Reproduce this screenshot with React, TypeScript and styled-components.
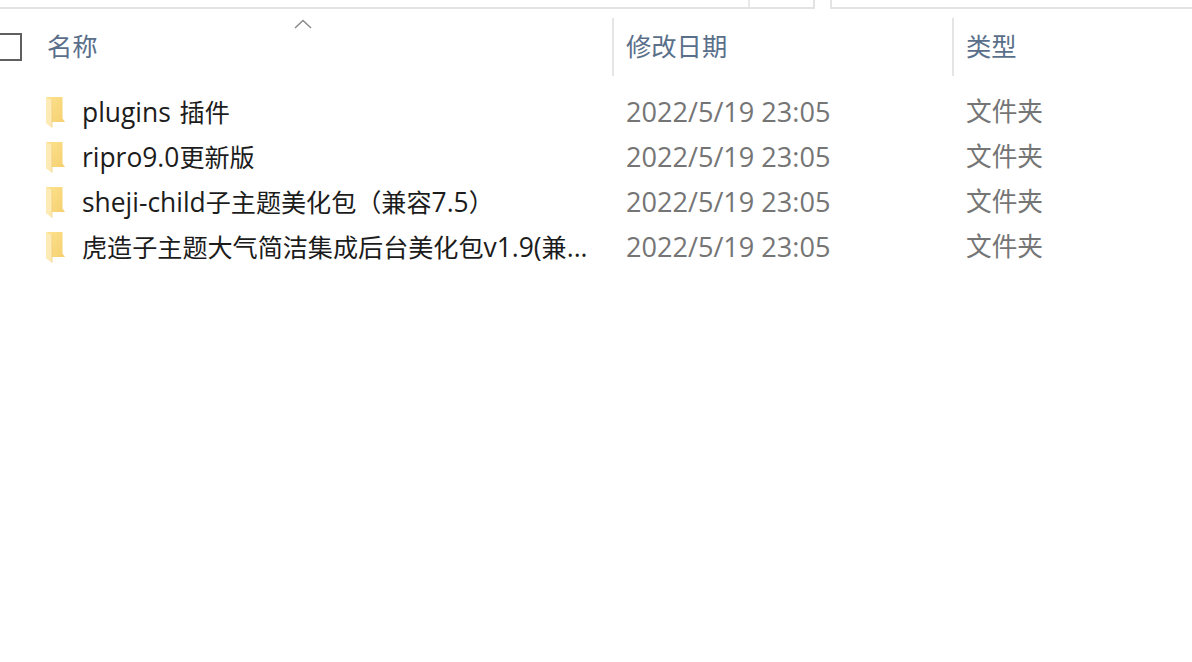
import styled, { createGlobalStyle } from 'styled-components'

const rows = [
  'plugins 插件',
  'ripro9.0更新版',
  'sheji-child子主题美化包（兼容7.5）',
  '虎造子主题大气简洁集成后台美化包v1.9(兼...',
]

const FolderIcon = () => (
  <svg width="24" height="32" viewBox="0 0 24 32">
    <defs>
      <linearGradient id="folderBack" x1="0" y1="0" x2="1" y2="1">
        <stop offset="0" stopColor="#fde38f" />
        <stop offset="1" stopColor="#f4cd6c" />
      </linearGradient>
    </defs>
    <path d="M2 1h16.500v21.500l2.500 3.500H8v5.500L2 27z" fill="url(#folderBack)" />
    <path d="M2 1l6 3v27.500L2 27z" fill="#fdeab4" />
    <path d="M8 4v27.500" fill="none" stroke="#eecb78" strokeWidth="0.7" />
  </svg>
)

// latin runs are set a bit larger than the CJK ones, like the original UI font
const splitRuns = (text: string) =>
  text.split(/([\x00-\x7f]+)/).filter(Boolean).map((run, i) =>
    /^[\x00-\x7f]/.test(run) ? <Latin key={i}>{run}</Latin> : <span key={i}>{run}</span>
  )

const App = () => {
  return (
    <Page>
      <GlobalStyle />
      <TopBar>
        <PathBox>
          <PathEnd />
        </PathBox>
        <SearchBox />
      </TopBar>
      <Header>
        <NameHead>
          <Checkbox />
          <HeadLabel>名称</HeadLabel>
          <SortArrow width="18" height="10" viewBox="0 0 18 10">
            <path d="M1 9l8-7.500 8 7.500" fill="none" stroke="#8a8a8a" strokeWidth="1.500" />
          </SortArrow>
        </NameHead>
        <HeadCell>
          <HeadLabel>修改日期</HeadLabel>
        </HeadCell>
        <HeadCell>
          <HeadLabel>类型</HeadLabel>
        </HeadCell>
      </Header>
      <List>
        {rows.map(name => (
          <Row key={name}>
            <NameCell>
              <FolderIcon />
              <FileName>{splitRuns(name)}</FileName>
            </NameCell>
            <DateCell>2022/5/19 23:05</DateCell>
            <TypeCell>文件夹</TypeCell>
          </Row>
        ))}
      </List>
    </Page>
  )
}

const GlobalStyle = createGlobalStyle`
  body {
    margin: 0;
    background: #fff;
    overflow: hidden;
    font-family: "Open Sans", "Noto Sans CJK SC", sans-serif;
  }
`

const Page = styled.div`
  width: 1192px;
  height: 662px;
  background: #fff;
  overflow: hidden;
`

const TopBar = styled.div`
  display: flex;
  height: 9px;
  gap: 15px;
`

const PathBox = styled.div`
  display: flex;
  justify-content: flex-end;
  width: 815px;
  box-sizing: border-box;
  border-bottom: 2px solid #e3e3e3;
  border-right: 2px solid #e3e3e3;
`

const PathEnd = styled.div`
  width: 63px;
  border-left: 2px solid #e8e8e8;
`

const SearchBox = styled.div`
  flex: 1;
  border-bottom: 2px solid #e3e3e3;
  border-left: 2px solid #e3e3e3;
`

const Header = styled.div`
  display: grid;
  grid-template-columns: 612px 340px 1fr;
  height: 58px;
  margin-top: 9px;
`

const NameHead = styled.div`
  position: relative;
  display: flex;
  align-items: center;
  padding-left: 47px;
  padding-bottom: 4px;
`

const Checkbox = styled.div`
  position: absolute;
  left: -6px;
  top: 15px;
  width: 28px;
  height: 28px;
  box-sizing: border-box;
  border: 2px solid #5f5f5f;
`

const SortArrow = styled.svg`
  position: absolute;
  left: 294px;
  top: 1px;
`

const HeadCell = styled.div`
  display: flex;
  align-items: center;
  padding-left: 12px;
  padding-bottom: 4px;
  border-left: 2px solid #e5e5e5;
`

const HeadLabel = styled.span`
  font-size: 25.300px;
  color: #5a6f8a;
`

const List = styled.div`
  display: flex;
  flex-direction: column;
  margin-top: 13px;
`

const Row = styled.div`
  display: grid;
  grid-template-columns: 613px 340px 1fr;
  align-items: center;
  height: 45px;
`

const NameCell = styled.div`
  display: flex;
  align-items: center;
  gap: 14px;
  padding-left: 44px;
`

const FileName = styled.span`
  font-size: 25.100px;
  line-height: 34px;
  color: #1c1c1c;
  white-space: nowrap;
`

const Latin = styled.span`
  font-size: 26.400px;
  word-spacing: 2px;
`

const DateCell = styled.div`
  padding-left: 13px;
  font-size: 27.100px;
  line-height: 34px;
  color: #757575;
  white-space: nowrap;
`

const TypeCell = styled.div`
  padding-left: 13px;
  font-size: 25.700px;
  line-height: 34px;
  color: #757575;
  white-space: nowrap;
`

export default App
